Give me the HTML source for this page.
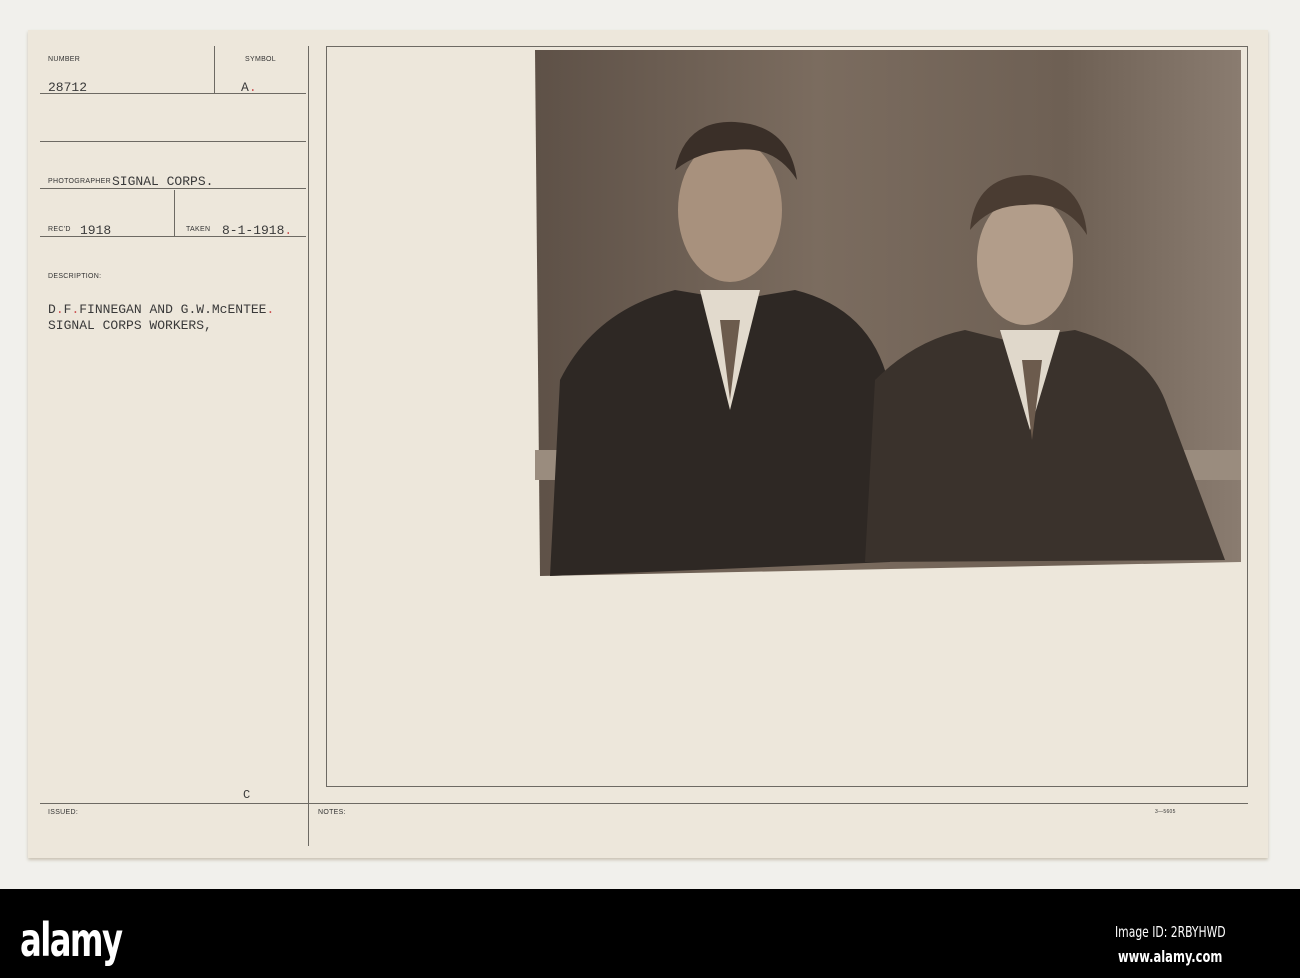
<!DOCTYPE html>
<html><head><style>
body{margin:0;width:1300px;height:978px;background:#f1f0ec;position:relative;overflow:hidden;font-family:"Liberation Mono",monospace;}
.card{position:absolute;left:28px;top:30px;width:1240px;height:828px;background:#ede7db;box-shadow:0 2px 3px #c9c2b3;}
.a{position:absolute;}
.l{position:absolute;background:#6d6a63;}
.sm{font-family:"Liberation Sans",sans-serif;font-size:7px;color:#333;letter-spacing:.3px;}
.t{font-size:13px;color:#3a3a3a;}
.band{position:absolute;left:0;top:889px;width:1300px;height:89px;background:#000;}
</style></head><body>
<div class="card"></div>
<div class="l" style="left:214px;top:46px;width:1px;height:48px"></div>
<div class="l" style="left:40px;top:93px;width:266px;height:1px"></div>
<div class="l" style="left:40px;top:141px;width:266px;height:1px"></div>
<div class="l" style="left:40px;top:188px;width:266px;height:1px"></div>
<div class="l" style="left:174px;top:190px;width:1px;height:46px"></div>
<div class="l" style="left:40px;top:236px;width:266px;height:1px"></div>
<div class="l" style="left:308px;top:46px;width:1px;height:800px"></div>
<div class="l" style="left:40px;top:803px;width:1208px;height:1px"></div>
<div class="a" style="left:326px;top:46px;width:920px;height:739px;border:1px solid #6d6a63"></div>
<div class="a sm" style="left:48px;top:56px">NUMBER</div>
<div class="a sm" style="left:245px;top:56px">SYMBOL</div>
<div class="a t" style="left:48px;top:80px">28712</div>
<div class="a t" style="left:241px;top:80px">A<span style="color:#c55">.</span></div>
<div class="a sm" style="left:48px;top:178px">PHOTOGRAPHER</div>
<div class="a t" style="left:112px;top:174px">SIGNAL CORPS.</div>
<div class="a sm" style="left:48px;top:226px">REC'D</div>
<div class="a t" style="left:80px;top:223px">1918</div>
<div class="a sm" style="left:186px;top:226px">TAKEN</div>
<div class="a t" style="left:222px;top:223px">8-1-1918<span style="color:#c55">.</span></div>
<div class="a sm" style="left:48px;top:273px">DESCRIPTION:</div>
<div class="a t" style="left:48px;top:302px;line-height:16px">D<span style="color:#c55">.</span>F<span style="color:#c55">.</span>FINNEGAN AND G.W.McENTEE<span style="color:#c55">.</span><br>SIGNAL CORPS WORKERS,</div>
<div class="a t" style="left:243px;top:788px;font-size:12px">C</div>
<div class="a sm" style="left:48px;top:809px">ISSUED:</div>
<div class="a sm" style="left:318px;top:809px">NOTES:</div>
<div class="a sm" style="left:1155px;top:809px;font-size:5px">3—5605</div>
<svg class="a" style="left:535px;top:50px" width="706" height="526" viewBox="0 0 706 526">
<defs><linearGradient id="g" x1="0" y1="0" x2="1" y2="0"><stop offset="0" stop-color="#5e5147"/><stop offset=".4" stop-color="#7b6c5f"/><stop offset=".75" stop-color="#6e6054"/><stop offset="1" stop-color="#8a7c70"/></linearGradient></defs>
<polygon points="0,0 706,0 706,512 5,526" fill="url(#g)"/>
<rect x="0" y="400" width="706" height="30" fill="#9a8c7e"/>
<path d="M15,526 L25,330 Q60,260 140,240 L200,250 L260,240 Q340,260 355,340 L355,512 Z" fill="#2e2824"/>
<path d="M330,512 L340,330 Q380,290 430,280 L470,290 L540,280 Q610,300 630,350 L690,510 Z" fill="#3a322c"/>
<ellipse cx="195" cy="160" rx="52" ry="72" fill="#a8917d"/>
<path d="M140,120 Q150,70 200,72 Q255,75 262,130 Q240,95 200,100 Q165,100 140,120Z" fill="#3a2f28"/>
<ellipse cx="490" cy="210" rx="48" ry="65" fill="#b29d8a"/>
<path d="M435,180 Q440,125 495,125 Q548,130 552,185 Q530,150 490,155 Q455,155 435,180Z" fill="#4a3c32"/>
<path d="M165,240 L195,360 L225,240 Z" fill="#e2dacd"/>
<path d="M465,280 L495,380 L525,280 Z" fill="#e0d8cb"/>
<path d="M185,270 L195,350 L205,270 Z" fill="#6c5b4d"/>
<path d="M487,310 L497,390 L507,310 Z" fill="#6c5b4d"/>
</svg>
<div class="band"></div>
<div class="a" style="left:20px;top:913px;color:#fff;font-family:'DejaVu Sans Condensed','Liberation Sans',sans-serif;font-weight:bold;font-size:46px;transform:scaleX(.78);transform-origin:left;letter-spacing:-2px">alamy</div>
<div class="a" style="left:1115px;top:923px;color:#fff;font-family:'DejaVu Sans Condensed',sans-serif;font-size:15px;transform:scaleX(.8);transform-origin:left">Image ID: 2RBYHWD</div>
<div class="a" style="left:1118px;top:947px;color:#fff;font-family:'DejaVu Sans Condensed',sans-serif;font-weight:bold;font-size:16px;transform:scaleX(.8);transform-origin:left">www.alamy.com</div>
</body></html>
